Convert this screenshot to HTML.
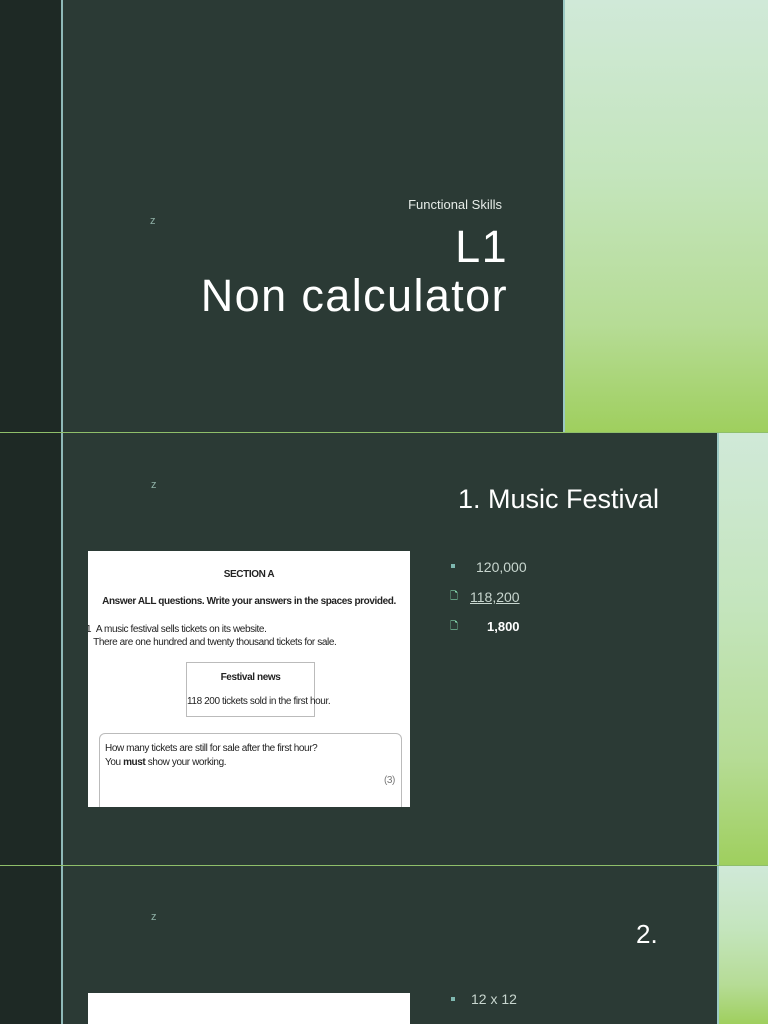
<!DOCTYPE html>
<html><head><meta charset="utf-8"><style>
*{margin:0;padding:0;box-sizing:border-box}
body{width:768px;height:1024px;overflow:hidden;background:#1f2b27;font-family:"Liberation Sans",sans-serif;position:relative}
.slide{position:absolute;left:0;width:768px;background:#2b3a35;overflow:hidden}
.strip{position:absolute;left:0;top:0;bottom:0;width:61px;background:#1e2925}
.vline{position:absolute;left:61px;top:0;bottom:0;width:2px;background:#8fb9b8}
.green{position:absolute;top:0;bottom:0;right:0;background:linear-gradient(180deg,#d0e9d8 0%,#c4e5bd 40%,#b6dc96 75%,#9fcf5e 100%)}
.z{position:absolute;color:#8fb0a6;font-size:11px}
.hl{position:absolute;left:0;width:768px;height:1px;background:#8fbf6a}
.doc{position:absolute;background:#fff;font-family:"Liberation Sans Narrow","Liberation Sans",sans-serif;color:#222;overflow:hidden;white-space:nowrap}
.b{position:absolute;color:#c8d6cf;font-size:14px}
.bul{position:absolute;width:4px;height:4px;background:#7fb8b0}
</style></head><body>
<div class="slide" style="top:0;height:432px">
 <div class="strip"></div><div class="vline"></div>
 <div class="green" style="left:563px;border-left:2px solid #9cc9c4"></div>
 <div class="z" style="left:150px;top:215px">z</div>
 <div style="position:absolute;right:266px;top:197px;color:#e6ece8;font-size:13px">Functional Skills</div>
 <div style="position:absolute;right:260px;top:222px;color:#fff;font-size:45px;line-height:49px;text-align:right;letter-spacing:1.4px">L1<br>Non calculator</div>
</div>
<div class="hl" style="top:432px"></div>
<div class="slide" style="top:433px;height:432px">
 <div class="strip"></div><div class="vline"></div>
 <div class="green" style="left:717px;border-left:2px solid #9cc9c4"></div>
 <div class="z" style="left:151px;top:46px">z</div>
 <div style="position:absolute;left:458px;top:51px;color:#fff;font-size:27px;letter-spacing:0">1. Music Festival</div>
 <div class="bul" style="left:451px;top:131px"></div>
 <div class="b" style="left:476px;top:126px">120,000</div>
 <div class="b" style="left:450px;top:156px;font-size:10px;color:#9fc">&#x1F5CB;</div>
 <div class="b" style="left:470px;top:156px;text-decoration:underline"> 118,200</div>
 <div class="b" style="left:450px;top:186px;font-size:10px;color:#9fc">&#x1F5CB;</div>
 <div class="b" style="left:487px;top:186px;color:#fff;font-weight:bold;font-size:13px">1,800</div>
 <div class="doc" style="left:88px;top:118px;width:322px;height:256px;font-size:10px;letter-spacing:-.4px">
  <div style="position:absolute;top:18px;width:100%;text-align:center;font-weight:bold">SECTION A</div>
  <div style="position:absolute;top:45px;width:100%;text-align:center;font-weight:bold">Answer ALL questions. Write your answers in the spaces provided.</div>
  <div style="position:absolute;left:-2px;top:72px;line-height:13px">1&nbsp;&nbsp;A music festival sells tickets on its website.<br>&nbsp;&nbsp;&nbsp;There are one hundred and twenty thousand tickets for sale.</div>
  <div style="position:absolute;left:98px;top:111px;width:129px;height:55px;border:1px solid #bbb;text-align:center;line-height:24px;padding-top:3px"><b>Festival news</b><br>118 200 tickets sold in the first hour.</div>
  <div style="position:absolute;left:11px;top:182px;width:303px;height:80px;border:1px solid #bbb;border-radius:6px;padding:8px 5px;line-height:14px">How many tickets are still for sale after the first hour?<br>You <b>must</b> show your working.<div style="position:absolute;right:6px;top:40px;color:#777">(3)</div></div>
 </div>
</div>
<div class="hl" style="top:865px"></div>
<div class="slide" style="top:866px;height:158px">
 <div class="strip"></div><div class="vline"></div>
 <div class="green" style="left:717px;border-left:2px solid #9cc9c4"></div>
 <div class="z" style="left:151px;top:45px">z</div>
 <div style="position:absolute;left:636px;top:53px;color:#fff;font-size:26px">2.</div>
 <div class="bul" style="left:451px;top:131px"></div>
 <div class="b" style="left:471px;top:125px">12 x 12</div>
 <div class="doc" style="left:88px;top:127px;width:322px;height:40px"></div>
</div>
</body></html>
